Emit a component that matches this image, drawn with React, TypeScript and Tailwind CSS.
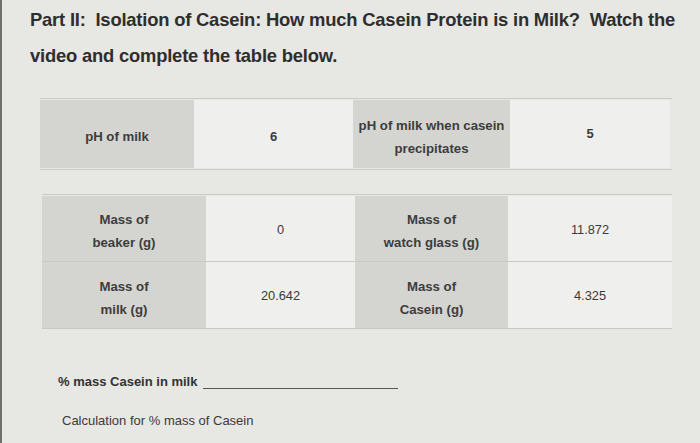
const row1 = [
  { label: ["pH of milk"], value: "6", pad: "pt-[6px]" },
  { label: ["pH of milk when casein", "precipitates"], value: "5", pad: "pt-[0px]" },
];

const rows2 = [
  [
    { label: ["Mass of", "beaker (g)"], value: "0" },
    { label: ["Mass of", "watch glass (g)"], value: "11.872" },
  ],
  [
    { label: ["Mass of", "milk (g)"], value: "20.642" },
    { label: ["Mass of", "Casein (g)"], value: "4.325" },
  ],
];

function Label({ lines }: { lines: string[] }) {
  return (
    <div className="flex flex-col items-center justify-center bg-[#d4d4d1] pt-[5px] text-[13.2px] font-bold leading-[23px] text-[#3d3d3d]">
      {lines.map((l) => (
        <span key={l}>{l}</span>
      ))}
    </div>
  );
}

export default function App() {
  return (
    <div
      className="h-[443px] w-[700px] overflow-hidden border-l-2 border-[#6f6f6d] bg-[#e7e7e4] text-[#2b2b2b]"
      style={{ fontFamily: '"Liberation Sans", Arial, sans-serif' }}
    >
      {/* Heading */}
      <div className="pl-[28px] pt-[2px] text-[18.4px] font-bold leading-[36px] tracking-[-0.2px] text-[#2e2e2e]">
        <p>Part II:&nbsp; Isolation of Casein: How much Casein Protein is in Milk?&nbsp; Watch the</p>
        <p>video and complete the table below.</p>
      </div>

      {/* Table 1 */}
      <div className="mt-[24px] ml-[38px] w-[632px] border-y border-[#c9c9c6] py-[1px]">
        <div className="grid h-[68px] grid-cols-[154px_159px_157px_160px]">
          {row1.map((c) => (
            <>
              <Label key={c.label[0]} lines={c.label} />
              <div key={c.value} className={`flex items-center justify-center bg-[#efefed] ${c.pad} text-[13px] font-bold text-[#3a3a3a]`}>
                {c.value}
              </div>
            </>
          ))}
        </div>
      </div>

      {/* Table 2 */}
      <div className="mt-[24px] ml-[40px] w-[630px] border-y border-[#c9c9c6] pt-[1px]">
        {rows2.map((r, i) => (
          <div
            key={i}
            className={`grid h-[66px] grid-cols-[164px_149px_153px_164px] ${i === 0 ? "border-b border-[#c9c9c6]" : ""}`}
          >
            {r.map((c) => (
              <>
                <Label key={c.label[1]} lines={c.label} />
                <div key={c.value} className="flex items-center justify-center bg-[#efefed] pt-[2px] text-[12.8px] text-[#3a3a3a]">
                  {c.value}
                </div>
              </>
            ))}
          </div>
        ))}
      </div>

      {/* Result line */}
      <div className="mt-[43px] ml-[56px] flex items-end text-[13px] font-bold text-[#333]">
        <span>% mass Casein in milk</span>
        <span className="ml-[6px] mb-[3px] w-[195px] border-b border-[#555]" />
      </div>

      <p className="mt-[19px] ml-[60px] text-[13px] text-[#3a3a3a]">Calculation for % mass of Casein</p>
    </div>
  );
}
